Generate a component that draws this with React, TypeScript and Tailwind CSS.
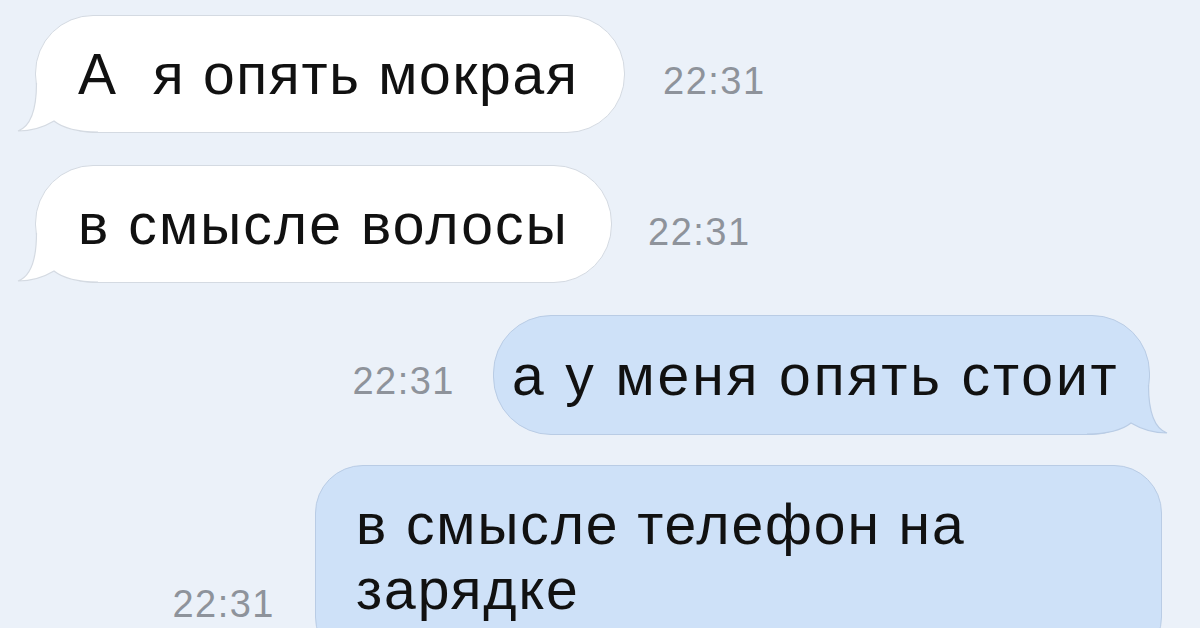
import React from 'react';

type Side = 'left' | 'right';

function Tail({ side, fill, stroke }: { side: Side; fill: string; stroke: string }) {
  // bubble edge sits at x=20, bubble bottom at y=48 in this box
  const flip = side === 'right';
  return (
    <svg
      width="100"
      height="52"
      viewBox="0 0 100 52"
      className={flip ? 'absolute right-[-20px] bottom-[-3px] -scale-x-100' : 'absolute left-[-20px] bottom-[-3px]'}
    >
      <path d="M20.5,0 C20.5,30 13,44 2,48 C16,48 28,44 38,38 C48,46 62,49 82,49 L82,0 Z" fill={fill} />
      <path
        d="M20.5,0 C20.5,30 13,44 2,48 C16,48 28,44 38,38 C48,46 62,49 82,49"
        fill="none"
        stroke={stroke}
        strokeWidth="1.2"
      />
    </svg>
  );
}

function Time({ className = '' }: { className?: string }) {
  return (
    <span className={`text-[38px] leading-none tracking-[1.5px] text-[#8e939b] shrink-0 ${className}`}>22:31</span>
  );
}

function Incoming({ text, className }: { text: string; className: string }) {
  return (
    <div
      className={`relative h-[118px] rounded-[58px] bg-white border border-[#d4dae2] flex items-center pl-[42px] text-[57px] leading-none text-[#111] whitespace-pre ${className}`}
    >
      <Tail side="left" fill="#ffffff" stroke="#d4dae2" />
      <span className="relative">{text}</span>
    </div>
  );
}

export default function App() {
  return (
    <div className="w-[1200px] h-[628px] overflow-hidden bg-[#ebf1f9] flex flex-col font-['Liberation_Sans',Arial,sans-serif]">
      <div className="flex items-center pl-[35px] pt-[15px] gap-[38px]">
        <Incoming text={'А  я опять мокрая'} className="w-[590px] tracking-[1.7px]" />
        <Time className="mt-[14px]" />
      </div>

      <div className="flex items-center pl-[35px] mt-[32px] gap-[36px]">
        <Incoming text="в смысле волосы" className="w-[577px] tracking-[2.1px]" />
        <Time className="mt-[16px]" />
      </div>

      <div className="flex items-center justify-end pr-[50px] mt-[32px] gap-[38px]">
        <Time className="mt-[12px]" />
        <div className="relative h-[120px] w-[657px] rounded-[58px] bg-[#cee1f8] border border-[#b9cce5] flex items-center pl-[18px] text-[57px] leading-none tracking-[2.9px] text-[#111]">
          <Tail side="right" fill="#cee1f8" stroke="#b9cce5" />
          <span className="relative">а у меня опять стоит</span>
        </div>
      </div>

      <div className="flex items-start justify-end pr-[38px] mt-[30px] gap-[40px]">
        <Time className="mt-[120px]" />
        <div className="h-[200px] w-[847px] shrink-0 rounded-[48px] bg-[#cee1f8] border border-[#b9cce5] pl-[40px] pt-[26px] text-[57px] leading-[65px] tracking-[1.9px] text-[#111]">
          в смысле телефон на
          <br />
          зарядке
        </div>
      </div>
    </div>
  );
}
